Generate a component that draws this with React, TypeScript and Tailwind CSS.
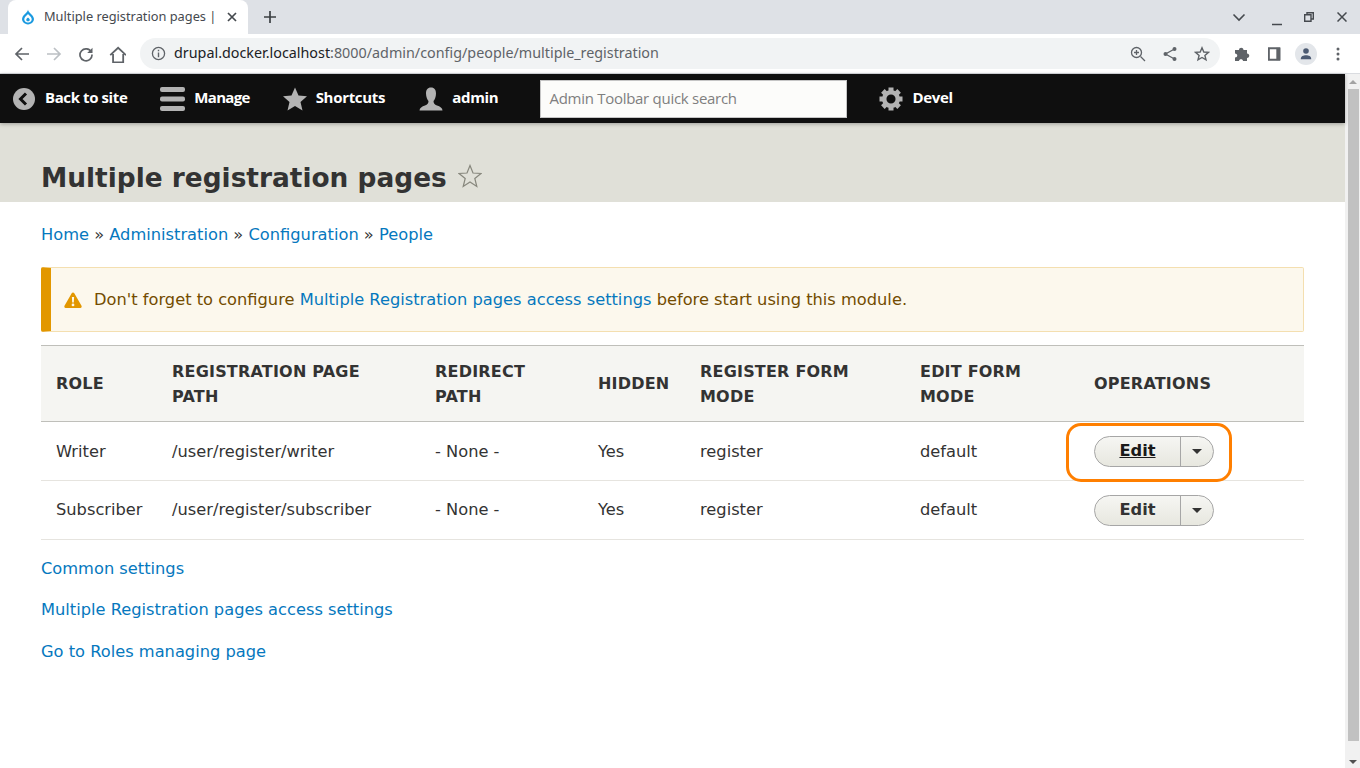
import React from "react";

const I = ({ className, children, vb = "0 0 16 16" }: { className?: string; children: React.ReactNode; vb?: string }) => (
  <svg viewBox={vb} className={className}>{children}</svg>
);

function TabStrip() {
  return (
    <div className="h-[34px] bg-[#dee1e6] flex items-end relative">
      <div className="ml-2 w-[240px] h-[34px] bg-white rounded-t-lg flex items-center pl-[13px] pr-[8px]">
        <I vb="0 0 16 18" className="w-[14px] h-[16px] shrink-0">
          <path d="M8 0.500 C8 3.500 2.500 6 1.300 10.500 C0.500 14 4 17.500 8 17.500 C12 17.500 15.500 14 14.700 10.500 C13.500 6 8 3.500 8 0.500Z" fill="#1b9ae0" />
          <path d="M3.800 11 C4.300 8.500 7 7 8 5.500 C9 7 11.700 8.500 12.200 11 C12.600 13.500 10.300 15.300 8 15.300 C5.700 15.300 3.400 13.500 3.800 11Z" fill="#fff" />
          <path d="M6 12 C6 10.800 7.300 10.300 8 9.500 C8.700 10.300 10 10.800 10 12 C10 13.200 9 13.800 8 13.800 C7 13.800 6 13.200 6 12Z" fill="#1b9ae0" />
        </I>
        <span className="ml-[9px] whitespace-nowrap text-[12.800px] text-[#45494e] font-['Noto_Sans',sans-serif]">Multiple registration pages |</span>
        <I className="w-[16px] h-[16px] ml-auto">
          <path d="M4 4 L12 12 M12 4 L4 12" stroke="#45494e" strokeWidth="1.700" fill="none" />
        </I>
      </div>
      <div className="ml-[14px] h-[34px] flex items-center">
        <I className="w-[16px] h-[16px]">
          <path d="M8 2 V14 M2 8 H14" stroke="#3c4043" strokeWidth="1.700" fill="none" />
        </I>
      </div>
      <div className="ml-auto h-[34px] flex items-center pr-[13px]">
        <I className="w-[16px] h-[16px]">
          <path d="M2.500 5.500 L8 11 L13.500 5.500" stroke="#45494e" strokeWidth="1.600" fill="none" />
        </I>
        <I vb="0 0 10 10" className="w-[10px] h-[10px] ml-[25px] mt-[7px]">
          <path d="M0 8.500 H10" stroke="#45494e" strokeWidth="1.500" fill="none" />
        </I>
        <I vb="0 0 10 10" className="w-[10px] h-[10px] ml-[22px]">
          <path d="M3 2 V0.700 H9.300 V7 H7.500 M0.700 2.700 H7 V9.300 H0.700 Z" stroke="#45494e" strokeWidth="1.400" fill="none" />
        </I>
        <I vb="0 0 10 10" className="w-[10px] h-[10px] ml-[23px]">
          <path d="M0.500 0.500 L9.500 9.500 M9.500 0.500 L0.500 9.500" stroke="#45494e" strokeWidth="1.500" fill="none" />
        </I>
      </div>
    </div>
  );
}

function NavBar() {
  return (
    <div className="h-[40px] bg-white border-b border-[#dadce0] flex items-center">
      <div className="ml-[14px] flex items-center">
        <I className="w-[16px] h-[16px]"><path d="M15 8 H2 M8 2 L2 8 L8 14" stroke="#5f6368" strokeWidth="1.700" fill="none" /></I>
        <I className="w-[16px] h-[16px] ml-[16px]"><path d="M1 8 H14 M8 2 L14 8 L8 14" stroke="#bcc0c4" strokeWidth="1.700" fill="none" /></I>
        <I className="w-[16px] h-[16px] ml-[16px]">
          <path d="M13.300 6 A6 6 0 1 0 14 8.500" stroke="#5f6368" strokeWidth="1.700" fill="none" />
          <path d="M14.500 1.700 V7 H9.200 Z" fill="#5f6368" />
        </I>
        <I className="w-[18px] h-[18px] ml-[14px]"><path d="M2 9 L9 2.500 L16 9 M4.500 8 V15.500 H13.500 V8" stroke="#5f6368" strokeWidth="1.600" fill="none" /></I>
      </div>
      <div className="ml-[14px] w-[1080px] h-[31px] rounded-full bg-[#f1f3f4] flex items-center pl-[11px]">
        <I className="w-[15px] h-[15px] shrink-0">
          <circle cx="8" cy="8" r="6.500" stroke="#5f6368" strokeWidth="1.400" fill="none" />
          <path d="M8 7 V12 M8 4 V5.600" stroke="#5f6368" strokeWidth="1.500" fill="none" />
        </I>
        <span className="ml-[8px] text-[14.330px] whitespace-nowrap font-['Noto_Sans',sans-serif] text-[#202124] -mt-px">drupal.docker.localhost<span className="text-[#5f6368]">:8000/admin/config/people/multiple_registration</span></span>
        <div className="ml-auto flex items-center pr-[10px]">
          <I className="w-[16px] h-[16px]">
            <circle cx="6.500" cy="6.500" r="5" stroke="#5f6368" strokeWidth="1.300" fill="none" />
            <path d="M10.500 10.500 L15 15 M6.500 4 V9 M4 6.500 H9" stroke="#5f6368" strokeWidth="1.300" fill="none" />
          </I>
          <I className="w-[16px] h-[16px] ml-[16px]">
            <path d="M12.500 3 L3.500 8 L12.500 13" stroke="#5f6368" strokeWidth="1.300" fill="none" />
            <circle cx="12.500" cy="3" r="2" fill="#5f6368" /><circle cx="3.500" cy="8" r="2" fill="#5f6368" /><circle cx="12.500" cy="13" r="2" fill="#5f6368" />
          </I>
          <I className="w-[16px] h-[16px] ml-[16px]">
            <path d="M8 1.800 L9.800 6 L14.400 6.400 L10.900 9.400 L12 13.900 L8 11.500 L4 13.900 L5.100 9.400 L1.600 6.400 L6.200 6 Z" stroke="#5f6368" strokeWidth="1.400" fill="none" />
          </I>
        </div>
      </div>
      <div className="ml-[14px] flex items-center">
        <I className="w-[16px] h-[16px]">
          <path d="M1 4 H5 C5 1 9.500 1 9.500 4 H13 V7.500 C16 7.500 16 12 13 12 V15 H9 C9 12.500 5 12.500 5 15 H1 V11.500 C4 11.500 4 7.500 1 7.500 Z" fill="#5f6368" />
        </I>
        <I className="w-[14px] h-[14px] ml-[18px]">
          <path d="M1 1.500 H13 V14.500 H1 Z" fill="none" stroke="#5f6368" strokeWidth="2.200" />
          <path d="M9.500 1 H14 V15 H9.500 Z" fill="#5f6368" />
        </I>
        <div className="ml-[13px] w-[22px] h-[22px] rounded-full bg-[#e3e6ea] flex items-center justify-center">
          <I className="w-[14px] h-[14px]">
            <circle cx="8" cy="4.500" r="3.200" fill="#4c5a72" />
            <path d="M2 14 C2 10.500 5 9.500 8 9.500 C11 9.500 14 10.500 14 14 Z" fill="#4c5a72" />
          </I>
        </div>
        <I className="w-[4px] h-[14px] ml-[19px]" vb="0 0 4 14">
          <circle cx="2" cy="2" r="1.500" fill="#5f6368" /><circle cx="2" cy="7" r="1.500" fill="#5f6368" /><circle cx="2" cy="12" r="1.500" fill="#5f6368" />
        </I>
      </div>
    </div>
  );
}

function ToolItem({ label, ml, gap, tracking, children }: { label: string; ml: string; gap: string; tracking: string; children: React.ReactNode }) {
  return (
    <div className={`flex items-center ${ml}`}>
      {children}
      <span className={`${gap} ${tracking} text-white font-bold text-[15px] leading-[20px] -mt-[4px] font-['Open_Sans',sans-serif]`}>{label}</span>
    </div>
  );
}

const gearTeeth = [0, 45, 90, 135, 180, 225, 270, 315];

function AdminBar() {
  return (
    <div className="h-[49px] shrink-0 bg-[#0f0f0f] flex items-center shadow-[0_1px_4px_rgba(0,0,0,0.3)] relative">
      <ToolItem label="Back to site" ml="ml-[13px]" gap="ml-[10px]" tracking="tracking-[-0.400px]">
        <I vb="0 0 22 22" className="w-[22px] h-[22px]">
          <circle cx="11" cy="11" r="11" fill="#b3b3b3" />
          <path d="M13 5.500 L7.500 11 L13 16.500" stroke="#0f0f0f" strokeWidth="3" fill="none" />
        </I>
      </ToolItem>
      <ToolItem label="Manage" ml="ml-[33px]" gap="ml-[9px]" tracking="tracking-[-0.700px]">
        <I vb="0 0 25 24" className="w-[25px] h-[24px]">
          <rect y="0" width="25" height="5" rx="2" fill="#b3b3b3" />
          <rect y="9.500" width="25" height="5" rx="2" fill="#b3b3b3" />
          <rect y="19" width="25" height="5" rx="2" fill="#b3b3b3" />
        </I>
      </ToolItem>
      <ToolItem label="Shortcuts" ml="ml-[33px]" gap="ml-[9px]" tracking="tracking-[-0.300px]">
        <I vb="0 0 24 24" className="w-[24px] h-[24px]">
          <path d="M12 0.500 L15.500 8.500 L24 9.200 L17.500 15 L19.500 23.500 L12 19 L4.500 23.500 L6.500 15 L0 9.200 L8.500 8.500 Z" fill="#b3b3b3" />
        </I>
      </ToolItem>
      <ToolItem label="admin" ml="ml-[34px]" gap="ml-[9px]" tracking="tracking-[-0.300px]">
        <I vb="0 0 24 24" className="w-[24px] h-[24px]">
          <path d="M12 0.500 C8.500 0.500 7 3 7 6.500 C7 10 8.500 13 9.500 14 C9.500 16.500 8.500 17.500 6 18.500 C3 19.500 0.500 21 0.500 23.500 H23.500 C23.500 21 21 19.500 18 18.500 C15.500 17.500 14.500 16.500 14.500 14 C15.500 13 17 10 17 6.500 C17 3 15.500 0.500 12 0.500 Z" fill="#b3b3b3" />
        </I>
      </ToolItem>
      <input
        placeholder="Admin Toolbar quick search"
        className="ml-[42px] w-[307px] h-[38px] bg-[#fcfcfa] border border-[#c5c5c5] px-[8px] pb-[2px] text-[15px] font-['Open_Sans',sans-serif] tracking-[-0.280px] placeholder:text-[#7f7f7f] outline-none"
      />
      <ToolItem label="Devel" ml="ml-[32px]" gap="ml-[9px]" tracking="tracking-[-0.300px]">
        <I vb="0 0 24 24" className="w-[24px] h-[24px]">
          {gearTeeth.map((a) => (
            <rect key={a} x="9.500" y="0.500" width="5" height="6" fill="#b3b3b3" transform={`rotate(${a} 12 12)`} />
          ))}
          <circle cx="12" cy="12" r="6.800" fill="none" stroke="#b3b3b3" strokeWidth="4.500" />
        </I>
      </ToolItem>
    </div>
  );
}

function Link({ children }: { children: React.ReactNode }) {
  return <a className="text-[#0678be]">{children}</a>;
}

function EditButton({ active }: { active?: boolean }) {
  return (
    <div className="flex w-[120px] h-[31px] rounded-full border border-[#a6a6a6] bg-gradient-to-b from-[#f6f6f3] to-[#e7e7df] text-[#333]">
      <div className={`w-[85px] flex items-center justify-center font-bold ${active ? "underline text-[#1a1a1a]" : ""}`}>Edit</div>
      <div className="flex-1 border-l border-[#a6a6a6] flex items-center justify-center pr-[1px]">
        <div className="w-0 h-0 border-x-[5px] border-x-transparent border-t-[5px] border-t-[#333] mt-[1px]" />
      </div>
    </div>
  );
}

const headers: [string, string][] = [
  ["ROLE", "w-[116px]"],
  ["REGISTRATION PAGE PATH", "w-[263px]"],
  ["REDIRECT PATH", "w-[163px]"],
  ["HIDDEN", "w-[102px]"],
  ["REGISTER FORM MODE", "w-[220px]"],
  ["EDIT FORM MODE", "w-[174px]"],
  ["OPERATIONS", "w-[225px]"],
];

const rows = [
  ["Writer", "/user/register/writer"],
  ["Subscriber", "/user/register/subscriber"],
];

function Content() {
  return (
    <div className="flex-1 min-w-0 font-['DejaVu_Sans',sans-serif] text-[16.250px] text-[#333]">
      <div className="h-[79px] bg-[#e0e0d8] pl-[41px] pt-[38px] flex items-start">
        <h1 className="text-[26.400px] leading-[34px] font-bold text-[#333] whitespace-nowrap">Multiple registration pages</h1>
        <I vb="0 0 24 24" className="w-[24px] h-[24px] ml-[11px] mt-[3px]">
          <path d="M12 1.500 L15 9 L23 9.500 L16.800 14.500 L18.800 22.500 L12 18 L5.200 22.500 L7.200 14.500 L1 9.500 L9 9 Z" fill="none" stroke="#87877d" strokeWidth="1.200" />
        </I>
      </div>
      <div className="pl-[41px] pr-[41px]">
        <div className="mt-[23px] h-[20px] leading-[20px] whitespace-nowrap">
          <Link>Home</Link> » <Link>Administration</Link> » <Link>Configuration</Link> » <Link>People</Link>
        </div>
        <div className="mt-[22px] h-[65px] flex items-center rounded-[2px] bg-[#fcf8ed] border border-[#f4dfb0] border-l-[10px] border-l-[#e29700] pl-[13px] text-[#734c00]">
          <I vb="0 0 18 16" className="w-[18px] h-[16px] shrink-0">
            <path fillRule="evenodd" d="M9 0.500 C9.600 0.500 10 0.800 10.300 1.300 L17.500 13.800 C18 14.700 17.500 16 16.300 16 H1.700 C0.500 16 0 14.700 0.500 13.800 L7.700 1.300 C8 0.800 8.400 0.500 9 0.500 Z M7.900 5 L8.200 10.500 H9.800 L10.100 5 Z M9 11.500 A1.400 1.400 0 1 0 9 14.300 A1.400 1.400 0 1 0 9 11.500 Z" fill="#e29700" />
          </I>
          <span className="ml-[12px] mt-[2px] whitespace-nowrap">
            Don't forget to configure <Link>Multiple Registration pages access settings</Link> before start using this module.
          </span>
        </div>
        <table className="mt-[13px] w-full table-fixed border-collapse">
          <thead>
            <tr className="h-[76px] bg-[#f5f5f2] border-y border-[#bfbfba]">
              {headers.map(([h, w]) => (
                <th key={h} className={`${w} pl-[15px] pr-[10px] text-left font-bold text-[16px] text-[#333] leading-[25px] tracking-[0.2px]`}>{h}</th>
              ))}
            </tr>
          </thead>
          <tbody>
            {rows.map(([role, path], i) => {
              const cell = i === 0 ? "pl-[15px] pt-[2px]" : "pl-[15px]";
              return (
                <tr key={role} className="h-[59px] border-b border-[#e6e4df]">
                  <td className={cell}>{role}</td>
                  <td className={cell}>{path}</td>
                  <td className={cell}>- None -</td>
                  <td className={cell}>Yes</td>
                  <td className={cell}>register</td>
                  <td className={cell}>default</td>
                  <td className="pl-[15px]">
                    <div className="relative">
                      <EditButton active={i === 0} />
                      {i === 0 && (
                        <div className="absolute left-[-28px] top-[-13px] w-[166px] h-[59px] rounded-[15px] border-[3px] border-[#ff7f00]" />
                      )}
                    </div>
                  </td>
                </tr>
              );
            })}
          </tbody>
        </table>
        <div className="mt-[19px] flex flex-col gap-[21px] leading-[20.400px]">
          <div><Link>Common settings</Link></div>
          <div><Link>Multiple Registration pages access settings</Link></div>
          <div><Link>Go to Roles managing page</Link></div>
        </div>
      </div>
    </div>
  );
}

function Scrollbar() {
  return (
    <div className="w-[15px] bg-[#f1f1f1] flex flex-col items-center">
      <div className="h-[15px] flex items-center justify-center shrink-0">
        <div className="w-0 h-0 border-x-[4px] border-x-transparent border-b-[4px] border-b-[#a3a3a3]" />
      </div>
      <div className="w-[11px] ml-[1px] h-[652px] bg-[#c1c1c1] shrink-0" />
      <div className="flex-1 flex items-end pb-[4px]">
        <div className="w-0 h-0 border-x-[4px] border-x-transparent border-t-[4px] border-t-[#505050]" />
      </div>
    </div>
  );
}

export default function App() {
  return (
    <div className="w-[1360px] h-[768px] overflow-hidden bg-white flex flex-col">
      <TabStrip />
      <NavBar />
      <div className="flex-1 flex min-h-0">
        <div className="flex-1 min-w-0 flex flex-col">
          <AdminBar />
          <Content />
        </div>
        <Scrollbar />
      </div>
    </div>
  );
}
